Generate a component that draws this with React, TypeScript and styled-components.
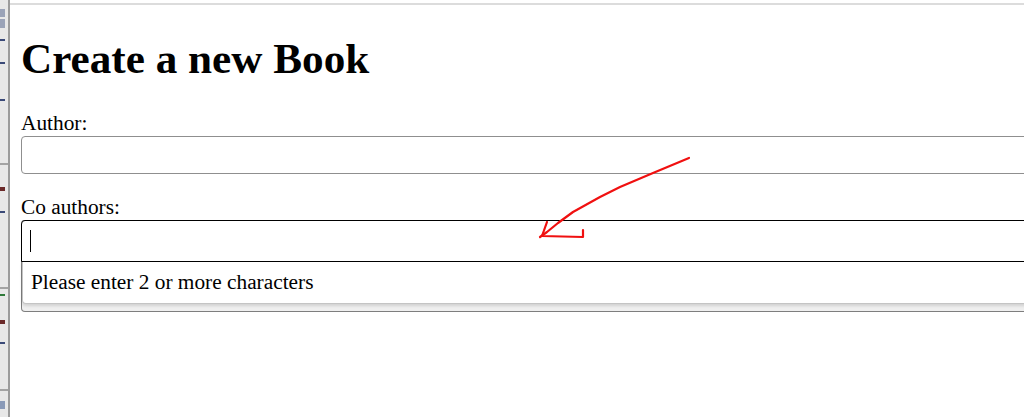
import styled, { createGlobalStyle } from 'styled-components'

const GlobalStyle = createGlobalStyle`
  html, body {
    margin: 0;
    padding: 0;
    background: #fff;
  }
  body {
    font-family: "Liberation Serif", "Times New Roman", serif;
    font-size: 21.33px;
    color: #000;
    overflow: hidden;
  }
`

const Screen = styled.div`
  position: relative;
  display: flex;
  width: 1024px;
  height: 417px;
  overflow: hidden;
`

/* the edge of the window lying next to the browser */
const SideStrip = styled.div`
  width: 8px;
  flex: none;
  display: flex;
  flex-direction: column;
  background: #e4e4e4;
  border-right: 2px solid #9c9c9c;
`

const Pane = styled.div<{ $h: number }>`
  height: ${(p) => p.$h}px;
  flex: none;
  display: flex;
  flex-direction: column;
  border-bottom: 2px solid #a3a3a3;
  background: #e8e8e8;
`

const Mark = styled.span<{ $mt: number; $color: string; $h?: number }>`
  display: block;
  margin-top: ${(p) => p.$mt}px;
  width: 5px;
  height: ${(p) => p.$h ?? 2}px;
  background: ${(p) => p.$color};
`

const Main = styled.main`
  flex: 1;
  min-width: 0;
  margin-top: 3px;
  border-top: 2px solid #dcdcdc;
  padding: 0 0 0 11px;
  overflow: hidden;
`

const Title = styled.h1`
  margin: 29px 0;
  font-size: 43.2px;
  line-height: 49px;
  font-weight: bold;
  white-space: nowrap;
`

const Field = styled.div`
  display: flex;
  flex-direction: column;
  width: 1040px;
  & + & {
    margin-top: 22px;
  }
`

const Label = styled.label`
  display: block;
  line-height: 23px;
  margin-bottom: 1px;
`

const TextInput = styled.input`
  box-sizing: border-box;
  width: 100%;
  height: 38px;
  margin: 0;
  padding: 0 8px;
  border: 1px solid #8f8f8f;
  border-radius: 4px;
  background: #fff;
  font: inherit;
  outline: none;
`

const SelectBox = styled.div`
  box-sizing: border-box;
  width: 100%;
  height: 92px;
  border: 1px solid #7e7e7e;
  border-top-color: #3a3a3a;
  border-radius: 4px;
  background: #efefef;
  display: flex;
  flex-direction: column;
`

const SelectControl = styled.div`
  box-sizing: border-box;
  height: 42px;
  margin: -1px -1px 0;
  padding-left: 8px;
  display: flex;
  align-items: center;
  border: 1px solid #000;
  border-radius: 4px 4px 0 0;
  background: #fff;
`

const Caret = styled.span`
  display: block;
  width: 1px;
  height: 22px;
  background: #000;
`

const Menu = styled.div`
  box-sizing: border-box;
  height: 42px;
  padding-left: 8px;
  display: flex;
  align-items: center;
  border: 1px solid #c4c4c4;
  border-top: none;
  border-radius: 0 0 4px 4px;
  background: #fff;
  box-shadow: 0 2px 3px rgba(0, 0, 0, 0.12);
  white-space: nowrap;
`

const Scribble = styled.svg`
  position: absolute;
  left: 0;
  top: 0;
  pointer-events: none;
`

export default function App() {
  return (
    <>
      <GlobalStyle />
      <Screen>
        <SideStrip>
          <Pane $h={163}>
            <Mark $mt={9} $color="#9aa3b8" $h={8} />
            <Mark $mt={2} $color="#9aa3b8" $h={9} />
            <Mark $mt={11} $color="#3b4a78" />
            <Mark $mt={21} $color="#3b4a78" />
            <Mark $mt={35} $color="#3b4a78" />
          </Pane>
          <Pane $h={122}>
            <Mark $mt={22} $color="#6b2a2a" $h={4} />
            <Mark $mt={20} $color="#3b4a78" />
          </Pane>
          <Pane $h={100}>
            <Mark $mt={5} $color="#2f7a3a" />
            <Mark $mt={24} $color="#6b2a2a" $h={4} />
            <Mark $mt={18} $color="#3b4a78" />
          </Pane>
          <Pane $h={40}>
            <Mark $mt={10} $color="#8a9ab8" $h={8} />
          </Pane>
        </SideStrip>

        <Main>
          <Title>Create a new Book</Title>

          <Field>
            <Label htmlFor="author">Author:</Label>
            <TextInput id="author" type="text" />
          </Field>

          <Field>
            <Label>Co authors:</Label>
            <SelectBox>
              <SelectControl>
                <Caret />
              </SelectControl>
              <Menu>Please enter 2 or more characters</Menu>
            </SelectBox>
          </Field>
        </Main>

        <Scribble width="1024" height="417" viewBox="0 0 1024 417">
          <path
            d="M689 158 L653 173 L620 187 L600 197 L573 212 L558 223 L547 232 L540 237"
            fill="none"
            stroke="#f01010"
            strokeWidth="2.2"
            strokeLinecap="round"
            strokeLinejoin="round"
          />
          <path
            d="M547 222 L542 236 L583 237 L583 230"
            fill="none"
            stroke="#f01010"
            strokeWidth="2.2"
            strokeLinecap="round"
            strokeLinejoin="round"
          />
        </Scribble>
      </Screen>
    </>
  )
}
